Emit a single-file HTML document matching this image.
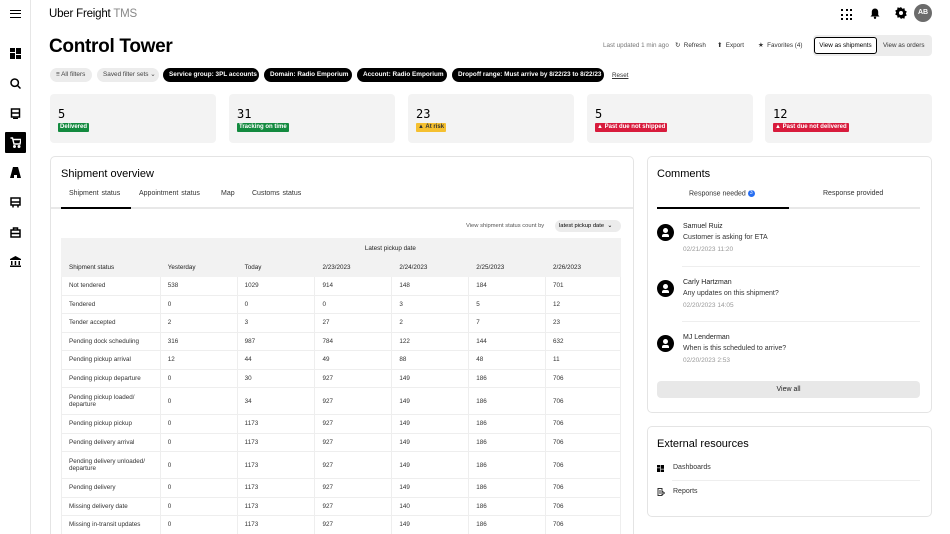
<!DOCTYPE html>
<html style="width:950px;height:534px;overflow:hidden"><head><meta charset="utf-8"><style>
*{box-sizing:border-box;margin:0;padding:0}
body{width:950px;height:534px;overflow:hidden;background:#fff;font-family:"Liberation Sans",sans-serif;color:#000;position:relative}
.a{position:absolute}
.side{left:0;top:0;width:31px;height:534px;border-right:1px solid #e6e6e6}
.ic{position:absolute;left:10px;width:11px;height:11px}
.chip{position:absolute;top:68px;height:14px;border-radius:7px;font-size:6.4px;line-height:14px;padding:0 6px;white-space:nowrap;overflow:hidden}
.dk{background:#000;color:#fff;font-weight:bold}
.lt{background:#ececec;color:#444}
.card{position:absolute;top:94px;height:49px;width:166px;background:#f3f3f3;border-radius:4px}
.card .n{position:absolute;left:8px;top:13px;font-family:"DejaVu Sans Mono","Liberation Mono",monospace;font-size:12px}
.card .b{position:absolute;left:8px;top:29px;height:9px;font-size:6px;line-height:9px;padding:0 2px;font-weight:bold;border-radius:1px;color:#fff}
.panel{position:absolute;background:#fff;border:1px solid #e4e4e4;border-radius:5px}
.h{font-size:11px;position:absolute}
table{border-collapse:collapse;position:absolute;left:61px;top:238px;width:560px;font-size:6.3px;color:#333}
td{border:1px solid #eee;padding:0 7px;height:18.5px}
tr.d td{height:27px}
thead td{background:#f2f2f2;border-color:#f2f2f2;height:19px;color:#222}
.sm{font-size:6.3px;color:#333;white-space:nowrap}
</style></head><body>
<div class="a side">
 <div class="a" style="left:10px;top:10px;width:11px;height:8px;border-top:1.5px solid #000;border-bottom:1.5px solid #000"><div style="margin-top:2px;border-top:1.5px solid #000"></div></div>
 <svg class="ic" style="top:48px" viewBox="0 0 11 11"><rect x="0" y="0" width="5" height="4"/><rect x="6" y="0" width="5" height="6"/><rect x="0" y="5" width="5" height="6"/><rect x="6" y="7" width="5" height="4"/></svg>
 <svg class="ic" style="top:78px" viewBox="0 0 11 11" fill="none" stroke="#000" stroke-width="1.5"><circle cx="4.7" cy="4.7" r="3.7"/><path d="M7.5 7.5L10.5 10.5"/></svg>
 <svg class="ic" style="top:108px" viewBox="0 0 11 11" fill="none" stroke="#000" stroke-width="1.5"><rect x="1.5" y="1" width="8" height="8"/><path d="M1.5 5h8M3 10.5h5"/></svg>
 <div class="a" style="left:5px;top:132px;width:21px;height:21px;background:#000;border-radius:1px"><svg style="position:absolute;left:5px;top:5px" width="11" height="11" viewBox="0 0 11 11" fill="none" stroke="#fff" stroke-width="1.4"><path d="M0.5 1h2l1.5 6h6l1-4.5H3"/><circle cx="4.5" cy="9.5" r=".8"/><circle cx="9" cy="9.5" r=".8"/></svg></div>
 <svg class="ic" style="top:167px" viewBox="0 0 11 11"><path d="M3 0h5l3 11H7V8H4v3H0z"/></svg>
 <svg class="ic" style="top:197px" viewBox="0 0 11 11" fill="none" stroke="#000" stroke-width="1.5"><rect x="1" y="1" width="9" height="7"/><path d="M1 5h9M3 8v2.5M8 8v2.5"/></svg>
 <svg class="ic" style="top:227px" viewBox="0 0 11 11" fill="none" stroke="#000" stroke-width="1.5"><rect x="1" y="3" width="9" height="7"/><path d="M3.5 3V1h4v2M1 6.5h9"/></svg>
 <svg class="ic" style="top:256px" viewBox="0 0 11 11"><path d="M5.5 0L11 3v1H0V3z"/><rect x="1" y="5" width="1.5" height="4"/><rect x="4.7" y="5" width="1.5" height="4"/><rect x="8.5" y="5" width="1.5" height="4"/><rect x="0" y="9.5" width="11" height="1.5"/></svg>
</div>
<div class="a" style="left:49px;top:8px;font-size:11.5px;letter-spacing:-.2px">Uber Freight <span style="color:#888">TMS</span></div>
<div class="a" style="left:841px;top:9px;width:11px;height:11px;display:grid;grid-template-columns:repeat(3,2px);gap:2.5px">
<i style="background:#000;width:2px;height:2px"></i><i style="background:#000;width:2px;height:2px"></i><i style="background:#000;width:2px;height:2px"></i><i style="background:#000;width:2px;height:2px"></i><i style="background:#000;width:2px;height:2px"></i><i style="background:#000;width:2px;height:2px"></i><i style="background:#000;width:2px;height:2px"></i><i style="background:#000;width:2px;height:2px"></i><i style="background:#000;width:2px;height:2px"></i></div>
<svg class="a" style="left:870px;top:8px" width="10" height="11" viewBox="0 0 10 11"><path d="M5 0.5c2 0 3.2 1.5 3.2 3.5v3l1.3 1.5H0.5L1.8 7V4C1.8 2 3 .5 5 .5z"/><circle cx="5" cy="9.8" r="1.2"/></svg>
<svg class="a" style="left:895px;top:7px" width="12" height="12" viewBox="0 0 12 12"><path d="M6 0l1.3 1.8 2.2-.5.3 2.2 2 1-1 2 1 1.9-2 1-.3 2.2-2.2-.5L6 12l-1.3-1.8-2.2.5-.3-2.2-2-1 1-2-1-1.9 2-1 .3-2.2 2.2.5z"/><circle cx="6" cy="6" r="2" fill="#fff"/></svg>
<div class="a" style="left:914px;top:4px;width:18px;height:18px;border-radius:50%;background:#6b6b6b;color:#fff;font-size:7px;font-weight:bold;line-height:18px;text-align:center">AB</div>
<div class="a" style="left:49px;top:36px;font-size:19px;font-weight:bold;letter-spacing:-.3px">Control Tower</div>
<div class="a sm" style="left:603px;top:42px;color:#777">Last updated 1 min ago</div>
<div class="a sm" style="left:675px;top:42px">&#x21BB;&nbsp; Refresh</div>
<div class="a sm" style="left:717px;top:42px">&#x2B06;&nbsp; Export</div>
<div class="a sm" style="left:758px;top:42px">&#9733;&nbsp; Favorites (4)</div>
<div class="a" style="left:813px;top:35px;width:119px;height:21px;background:#ececec;border-radius:4px"></div>
<div class="a sm" style="left:814px;top:37px;width:63px;height:17px;background:#fff;border:1px solid #000;border-radius:3px;line-height:15px;text-align:center;color:#000">View as shipments</div>
<div class="a sm" style="left:883px;top:42px">View as orders</div>
<div class="chip lt" style="left:50px;width:42px">&#8801; All filters</div>
<div class="chip lt" style="left:97px;width:62px">Saved filter sets &#8964;</div>
<div class="chip dk" style="left:163px;width:96px">Service group: 3PL accounts &nbsp;×</div>
<div class="chip dk" style="left:264px;width:88px">Domain: Radio Emporium &nbsp;×</div>
<div class="chip dk" style="left:357px;width:90px">Account: Radio Emporium &nbsp;×</div>
<div class="chip dk" style="left:452px;width:152px">Dropoff range: Must arrive by 8/22/23 to 8/22/23 &nbsp;×</div>
<div class="a sm" style="left:612px;top:72px;text-decoration:underline">Reset</div>
<div class="card" style="left:50px"><div class="n">5</div><div class="b" style="background:#138a3f">Delivered</div></div>
<div class="card" style="left:229px"><div class="n">31</div><div class="b" style="background:#138a3f">Tracking on time</div></div>
<div class="card" style="left:408px"><div class="n">23</div><div class="b" style="background:#f5c030;color:#333">▲ At risk</div></div>
<div class="card" style="left:587px"><div class="n">5</div><div class="b" style="background:#d81b3c">▲ Past due not shipped</div></div>
<div class="card" style="left:765px;width:167px"><div class="n">12</div><div class="b" style="background:#d81b3c">▲ Past due not delivered</div></div>

<div class="panel" style="left:50px;top:156px;width:584px;height:390px"></div>
<div class="h" style="left:61px;top:168px">Shipment overview</div>
<div class="a" style="left:69px;top:190px;font-size:7px;color:#333;word-spacing:1px"><span>Shipment status</span><span style="position:absolute;left:70px;white-space:nowrap">Appointment status</span><span style="position:absolute;left:152px">Map</span><span style="position:absolute;left:183px;white-space:nowrap">Customs status</span></div>
<div class="a" style="left:51px;top:207px;width:582px;height:2px;background:#e8e8e8"></div>
<div class="a" style="left:61px;top:207px;width:70px;height:2px;background:#000"></div>
<div class="a" style="left:466px;top:223px;font-size:5.8px;color:#555;white-space:nowrap">View shipment status count by</div>
<div class="a" style="left:555px;top:220px;width:66px;height:12px;background:#ececec;border-radius:6px;font-size:5.8px;line-height:12px;padding-left:4px;white-space:nowrap">latest pickup date &nbsp;&#8964;</div>
<table>
<colgroup><col style="width:99px"><col style="width:77px"><col style="width:78px"><col style="width:77px"><col style="width:77px"><col style="width:77px"><col style="width:75px"></colgroup>
<thead><tr><td></td><td colspan="6" style="text-align:center">Latest pickup date</td></tr>
<tr><td>Shipment status</td><td>Yesterday</td><td>Today</td><td>2/23/2023</td><td>2/24/2023</td><td>2/25/2023</td><td>2/26/2023</td></tr></thead>
<tbody>
<tr><td>Not tendered</td><td>538</td><td>1029</td><td>914</td><td>148</td><td>184</td><td>701</td></tr>
<tr><td>Tendered</td><td>0</td><td>0</td><td>0</td><td>3</td><td>5</td><td>12</td></tr>
<tr><td>Tender accepted</td><td>2</td><td>3</td><td>27</td><td>2</td><td>7</td><td>23</td></tr>
<tr><td>Pending dock scheduling</td><td>316</td><td>987</td><td>784</td><td>122</td><td>144</td><td>632</td></tr>
<tr><td>Pending pickup arrival</td><td>12</td><td>44</td><td>49</td><td>88</td><td>48</td><td>11</td></tr>
<tr><td>Pending pickup departure</td><td>0</td><td>30</td><td>927</td><td>149</td><td>186</td><td>706</td></tr>
<tr class="d"><td>Pending pickup loaded/<br>departure</td><td>0</td><td>34</td><td>927</td><td>149</td><td>186</td><td>706</td></tr>
<tr><td>Pending pickup pickup</td><td>0</td><td>1173</td><td>927</td><td>149</td><td>186</td><td>706</td></tr>
<tr><td>Pending delivery arrival</td><td>0</td><td>1173</td><td>927</td><td>149</td><td>186</td><td>706</td></tr>
<tr class="d"><td>Pending delivery unloaded/<br>departure</td><td>0</td><td>1173</td><td>927</td><td>149</td><td>186</td><td>706</td></tr>
<tr><td>Pending delivery</td><td>0</td><td>1173</td><td>927</td><td>149</td><td>186</td><td>706</td></tr>
<tr><td>Missing delivery date</td><td>0</td><td>1173</td><td>927</td><td>140</td><td>186</td><td>706</td></tr>
<tr><td>Missing in-transit updates</td><td>0</td><td>1173</td><td>927</td><td>149</td><td>186</td><td>706</td></tr>
</tbody></table>

<div class="panel" style="left:647px;top:156px;width:285px;height:257px"></div>
<div class="h" style="left:657px;top:168px">Comments</div>
<div class="a" style="left:689px;top:190px;font-size:7px;color:#333">Response needed <span style="display:inline-block;width:7px;height:7px;border-radius:50%;background:#276ef1;color:#fff;font-size:5px;line-height:7px;text-align:center;vertical-align:middle">3</span></div>
<div class="a" style="left:823px;top:190px;font-size:7px;color:#333">Response provided</div>
<div class="a" style="left:657px;top:207px;width:263px;height:2px;background:#e8e8e8"></div>
<div class="a" style="left:657px;top:207px;width:132px;height:2px;background:#000"></div>

<div class="a" style="left:657px;top:224px">
 <div class="a" style="left:0;top:0;width:17px;height:17px;border-radius:50%;background:#000"><div class="a" style="left:6px;top:4px;width:5px;height:5px;border-radius:50%;background:#fff"></div><div class="a" style="left:5px;top:10px;width:7px;height:3px;border-radius:2px 2px 0 0;background:#fff"></div></div>
 <div class="a" style="left:26px;top:-1px;font-size:7px;white-space:nowrap;color:#222">Samuel Ruiz</div>
 <div class="a" style="left:26px;top:10px;font-size:7px;white-space:nowrap;color:#333">Customer is asking for ETA</div>
 <div class="a" style="left:26px;top:22px;font-size:6.5px;white-space:nowrap;color:#999">02/21/2023 11:20</div>
</div>
<div class="a" style="left:682px;top:266px;width:238px;height:1px;background:#eee"></div>
<div class="a" style="left:657px;top:280px">
 <div class="a" style="left:0;top:0;width:17px;height:17px;border-radius:50%;background:#000"><div class="a" style="left:6px;top:4px;width:5px;height:5px;border-radius:50%;background:#fff"></div><div class="a" style="left:5px;top:10px;width:7px;height:3px;border-radius:2px 2px 0 0;background:#fff"></div></div>
 <div class="a" style="left:26px;top:-1px;font-size:7px;white-space:nowrap;color:#222">Carly Hartzman</div>
 <div class="a" style="left:26px;top:10px;font-size:7px;white-space:nowrap;color:#333">Any updates on this shipment?</div>
 <div class="a" style="left:26px;top:22px;font-size:6.5px;white-space:nowrap;color:#999">02/20/2023 14:05</div>
</div>
<div class="a" style="left:682px;top:321px;width:238px;height:1px;background:#eee"></div>
<div class="a" style="left:657px;top:335px">
 <div class="a" style="left:0;top:0;width:17px;height:17px;border-radius:50%;background:#000"><div class="a" style="left:6px;top:4px;width:5px;height:5px;border-radius:50%;background:#fff"></div><div class="a" style="left:5px;top:10px;width:7px;height:3px;border-radius:2px 2px 0 0;background:#fff"></div></div>
 <div class="a" style="left:26px;top:-1px;font-size:7px;white-space:nowrap;color:#222">MJ Lenderman</div>
 <div class="a" style="left:26px;top:10px;font-size:7px;white-space:nowrap;color:#333">When is this scheduled to arrive?</div>
 <div class="a" style="left:26px;top:22px;font-size:6.5px;white-space:nowrap;color:#999">02/20/2023 2:53</div>
</div>
<div class="a" style="left:657px;top:381px;width:263px;height:17px;background:#e8e8e8;border-radius:4px;font-size:7px;line-height:17px;text-align:center;color:#222">View all</div>

<div class="panel" style="left:647px;top:426px;width:285px;height:91px"></div>
<div class="h" style="left:657px;top:438px">External resources</div>
<svg class="a" style="left:657px;top:465px" width="7" height="7" viewBox="0 0 11 11"><rect x="0" y="0" width="5" height="4"/><rect x="6" y="0" width="5" height="6"/><rect x="0" y="5" width="5" height="6"/><rect x="6" y="7" width="5" height="4"/></svg>
<div class="a" style="left:673px;top:464px;font-size:7px;color:#333">Dashboards</div>
<div class="a" style="left:672px;top:480px;width:248px;height:1px;background:#eee"></div>
<svg class="a" style="left:657px;top:488px" width="8" height="8" viewBox="0 0 8 8" fill="none" stroke="#333" stroke-width="1"><path d="M1 .5h4v7H1zM2 3h2M2 5h2M5 3l2.5 2L5 7"/></svg>
<div class="a" style="left:673px;top:488px;font-size:7px;color:#333">Reports</div>
</body></html>
